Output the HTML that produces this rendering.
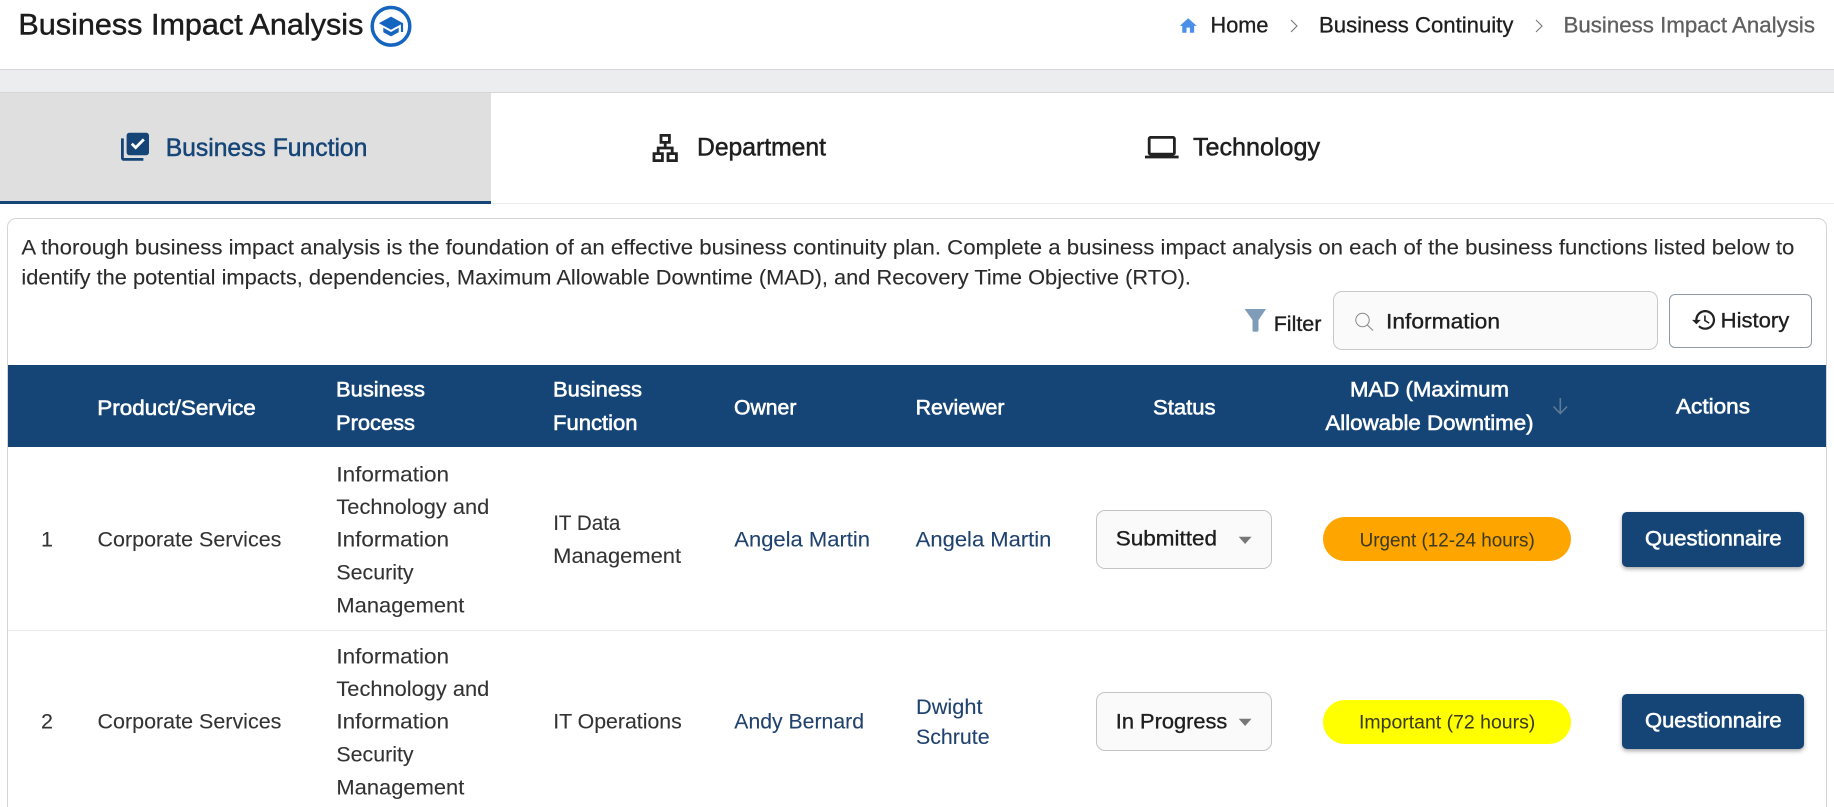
<!DOCTYPE html>
<html lang="en">
<head>
<meta charset="utf-8">
<title>Business Impact Analysis</title>
<style>
html,body{margin:0;padding:0;background:#fff;width:1834px;height:807px;overflow:hidden}
#page{position:relative;width:1834px;height:807px;overflow:hidden;background:#fff}
.box{position:absolute;box-sizing:border-box}
svg{position:absolute;left:0;top:0}
text{font-family:"Liberation Sans",Arial,sans-serif;white-space:pre}
.b{font-size:21.5px;fill:#333;stroke:#333;stroke-width:.1px}
.p{font-size:21.5px;fill:#2b2b2b;stroke:#2b2b2b;stroke-width:.1px}
.l{font-size:21.5px;fill:#20426e;stroke:#20426e;stroke-width:.1px}
.h{font-size:21.5px;fill:#fff;stroke:#fff;stroke-width:.6px}
.m{font-size:21.5px;fill:#1e1e1e;stroke:#1e1e1e;stroke-width:.35px}
.t{font-size:25px;fill:#1e1e1e;stroke:#1e1e1e;stroke-width:.5px}
.c{font-size:22px;fill:#1e1e1e;stroke:#1e1e1e;stroke-width:.3px}
.s{font-size:19px;fill:#3b3b20;stroke:#3b3b20;stroke-width:.05px}
</style>
</head>
<body>
<div id="page">
<div class="box" style="left:0;top:69px;width:1834px;height:24px;background:#ecedef;border-top:1px solid #d6d6d9;border-bottom:1px solid #d6d6d9"></div>
<div class="box" style="left:0;top:93px;width:491px;height:108px;background:#dfdfe0"></div>
<div class="box" style="left:0;top:201px;width:491px;height:3px;background:#154576"></div>
<div class="box" style="left:491px;top:203px;width:1343px;height:1px;background:#ededed"></div>
<div class="box" style="left:7px;top:218px;width:1820px;height:620px;border:1px solid #d2d4d7;border-radius:9px;background:#fff"></div>
<div class="box" style="left:8px;top:365px;width:1818px;height:82px;background:#154576"></div>
<div class="box" style="left:8px;top:630px;width:1818px;height:1px;background:#ececec"></div>
<div class="box" style="left:1333px;top:291px;width:325px;height:59px;background:#fafafa;border:1px solid #c6c8cc;border-radius:9px"></div>
<div class="box" style="left:1669px;top:294px;width:143px;height:54px;background:#fff;border:1px solid #8e9aa8;border-radius:6px"></div>
<div class="box" style="left:1096px;top:510px;width:176px;height:59px;background:#fafafa;border:1px solid #c4c4c4;border-radius:9px"></div>
<div class="box" style="left:1096px;top:692px;width:176px;height:59px;background:#fafafa;border:1px solid #c4c4c4;border-radius:9px"></div>
<div class="box" style="left:1323px;top:517px;width:248px;height:44px;background:#ffa500;border-radius:22px"></div>
<div class="box" style="left:1323px;top:700px;width:248px;height:44px;background:#ffff00;border-radius:22px"></div>
<div class="box" style="left:1622px;top:512px;width:182px;height:55px;background:#154576;border-radius:5px;box-shadow:0 2px 4px rgba(0,0,0,.35)"></div>
<div class="box" style="left:1622px;top:694px;width:182px;height:55px;background:#154576;border-radius:5px;box-shadow:0 2px 4px rgba(0,0,0,.35)"></div>

<svg width="1834" height="807" viewBox="0 0 1834 807" xmlns="http://www.w3.org/2000/svg">
<!-- title -->
<text x="18.4" y="34.3" font-size="29.5" fill="#1c1c1c" stroke="#1c1c1c" stroke-width=".45" textLength="345" lengthAdjust="spacingAndGlyphs">Business Impact Analysis</text>
<circle cx="391" cy="26.3" r="18.8" fill="none" stroke="#1565c0" stroke-width="3.5"/>
<g transform="translate(377.8 13.3) scale(1.1)"><path fill="#1565c0" d="M5 13.18v4L12 21l7-3.82v-4L12 17l-7-3.82zM12 3L1 9l11 6 9-4.91V17h2V9L12 3z"/></g>

<!-- breadcrumb -->
<g transform="translate(1178 15.7) scale(.85)"><path fill="#4a90e8" d="M10 20v-6h4v6h5v-8h3L12 3 2 12h3v8z"/></g>
<text class="c" x="1210.5" y="32.7" textLength="58" lengthAdjust="spacingAndGlyphs">Home</text>
<path d="M1291 20l6 6-6 6" fill="none" stroke="#777" stroke-width="1.1"/>
<text class="c" x="1319" y="32.7" textLength="194.4" lengthAdjust="spacingAndGlyphs">Business Continuity</text>
<path d="M1536 20l6 6-6 6" fill="none" stroke="#777" stroke-width="1.1"/>
<text class="c" x="1563.5" y="32.7" textLength="251.5" lengthAdjust="spacingAndGlyphs" style="fill:#5f5f5f;stroke:#5f5f5f">Business Impact Analysis</text>

<!-- tabs -->
<g transform="translate(118.2 130) scale(1.4)"><rect x="8" y="4" width="12" height="12" fill="#fff"/><path fill="#154576" d="M20 2H8c-1.1 0-2 .9-2 2v12c0 1.1.9 2 2 2h12c1.1 0 2-.9 2-2V4c0-1.1-.9-2-2-2zm-7.53 12L9 10.5l1.4-1.41 2.07 2.08L17.6 6 19 7.41 12.47 14zM4 20h14v2H4c-1.1 0-2-.9-2-2V6h2v14z"/></g>
<text class="t" x="165.7" y="156" textLength="201.7" lengthAdjust="spacingAndGlyphs" style="fill:#164577;stroke:#164577">Business Function</text>
<g transform="translate(648.4 131.2) scale(1.4)"><path fill="#222" d="M13 22h8v-7h-3v-4h-5V9h3V2H8v7h3v2H6v4H3v7h8v-7H8v-2h8v2h-3v7zM10 7V4h4v3h-4zM9 17v3H5v-3h4zm10 0v3h-4v-3h4z"/></g>
<text class="t" x="697" y="155.7" textLength="129" lengthAdjust="spacingAndGlyphs">Department</text>
<g transform="translate(1145 130.4) scale(1.4)"><path fill="#222" d="M20 18c1.1 0 1.99-.9 1.99-2L22 6c0-1.1-.9-2-2-2H4c-1.1 0-2 .9-2 2v10c0 1.1.9 2 2 2H0v2h24v-2h-4zM4 6h16v10H4V6z"/></g>
<text class="t" x="1193" y="155.7" textLength="127" lengthAdjust="spacingAndGlyphs">Technology</text>

<!-- intro -->
<text class="p" x="21.4" y="254.3" textLength="1773" lengthAdjust="spacingAndGlyphs">A thorough business impact analysis is the foundation of an effective business continuity plan. Complete a business impact analysis on each of the business functions listed below to</text>
<text class="p" x="21.4" y="284.3" textLength="1169.6" lengthAdjust="spacingAndGlyphs">identify the potential impacts, dependencies, Maximum Allowable Downtime (MAD), and Recovery Time Objective (RTO).</text>

<!-- filter -->
<path fill="#7f9cb8" d="M1244.6 309H1266L1258.5 320V330.3Q1258.5 331.7 1257 331.7H1254Q1252.5 331.7 1252.5 330.3V320Z"/>
<text class="m" x="1273.7" y="331" textLength="47.7" lengthAdjust="spacingAndGlyphs">Filter</text>
<circle cx="1362.5" cy="320" r="6.7" fill="none" stroke="#8a8a8a" stroke-width="1"/>
<path d="M1367.3 325L1373 330.5" stroke="#8a8a8a" stroke-width="1.1" fill="none"/>
<text class="m" x="1386" y="328.3" textLength="114" lengthAdjust="spacingAndGlyphs">Information</text>
<g transform="translate(1690.9 306.7) scale(1.1)"><path fill="#222" d="M13 3c-4.97 0-9 4.03-9 9H1l3.89 3.89.07.14L9 12H6c0-3.87 3.13-7 7-7s7 3.13 7 7-3.13 7-7 7c-1.93 0-3.68-.79-4.94-2.06l-1.42 1.42C8.27 19.99 10.51 21 13 21c4.97 0 9-4.03 9-9s-4.03-9-9-9zm-1 5v5l4.28 2.54.72-1.21-3.5-2.08V8H12z"/></g>
<text class="m" x="1720.7" y="327.7" textLength="68.6" lengthAdjust="spacingAndGlyphs">History</text>

<!-- table head -->
<text class="h" x="97.3" y="415" textLength="158.5" lengthAdjust="spacingAndGlyphs">Product/Service</text>
<text class="h" x="336" y="396.7" textLength="89" lengthAdjust="spacingAndGlyphs">Business</text>
<text class="h" x="336" y="430" textLength="79" lengthAdjust="spacingAndGlyphs">Process</text>
<text class="h" x="553" y="396.7" textLength="89" lengthAdjust="spacingAndGlyphs">Business</text>
<text class="h" x="553" y="430" textLength="84.5" lengthAdjust="spacingAndGlyphs">Function</text>
<text class="h" x="734" y="414.3" textLength="62.4" lengthAdjust="spacingAndGlyphs">Owner</text>
<text class="h" x="915.6" y="414.3" textLength="88.9" lengthAdjust="spacingAndGlyphs">Reviewer</text>
<text class="h" x="1153" y="414.3" textLength="62.6" lengthAdjust="spacingAndGlyphs">Status</text>
<text class="h" x="1350" y="396.7" textLength="159" lengthAdjust="spacingAndGlyphs">MAD (Maximum</text>
<text class="h" x="1325.4" y="430" textLength="208.2" lengthAdjust="spacingAndGlyphs">Allowable Downtime)</text>
<path d="M1560.3 398V413M1553.5 406.5L1560.3 413.5L1567.1 406.5" fill="none" stroke="#5f7a96" stroke-width="1.6"/>
<text class="h" x="1676" y="413.7" textLength="74" lengthAdjust="spacingAndGlyphs">Actions</text>

<!-- row 1 -->
<text class="b" x="41" y="546.7">1</text>
<text class="b" x="97.5" y="546.7" textLength="183.9" lengthAdjust="spacingAndGlyphs">Corporate Services</text>
<text class="b" x="336.4" y="481.3" textLength="112.6" lengthAdjust="spacingAndGlyphs">Information</text>
<text class="b" x="336.4" y="514" textLength="152.9" lengthAdjust="spacingAndGlyphs">Technology and</text>
<text class="b" x="336.4" y="546.7" textLength="112.6" lengthAdjust="spacingAndGlyphs">Information</text>
<text class="b" x="336.4" y="579.3" textLength="77.2" lengthAdjust="spacingAndGlyphs">Security</text>
<text class="b" x="336.4" y="612.7" textLength="127.9" lengthAdjust="spacingAndGlyphs">Management</text>
<text class="b" x="553.2" y="530" textLength="67.2" lengthAdjust="spacingAndGlyphs">IT Data</text>
<text class="b" x="553.2" y="563" textLength="127.9" lengthAdjust="spacingAndGlyphs">Management</text>
<text class="l" x="734.3" y="546.7" textLength="135.7" lengthAdjust="spacingAndGlyphs">Angela Martin</text>
<text class="l" x="915.7" y="546.7" textLength="135.7" lengthAdjust="spacingAndGlyphs">Angela Martin</text>
<text class="m" x="1115.8" y="545.7" textLength="101.2" lengthAdjust="spacingAndGlyphs">Submitted</text>
<path fill="#777" d="M1238.7 536.7H1251.5L1245.1 544Z"/>
<text class="s" x="1359.6" y="546.7" textLength="175.2" lengthAdjust="spacingAndGlyphs">Urgent (12-24 hours)</text>
<text class="h" x="1645" y="545.7" textLength="136.6" lengthAdjust="spacingAndGlyphs">Questionnaire</text>

<!-- row 2 -->
<text class="b" x="41" y="728.7">2</text>
<text class="b" x="97.5" y="728.7" textLength="183.9" lengthAdjust="spacingAndGlyphs">Corporate Services</text>
<text class="b" x="336.4" y="663.3" textLength="112.6" lengthAdjust="spacingAndGlyphs">Information</text>
<text class="b" x="336.4" y="696" textLength="152.9" lengthAdjust="spacingAndGlyphs">Technology and</text>
<text class="b" x="336.4" y="728.7" textLength="112.6" lengthAdjust="spacingAndGlyphs">Information</text>
<text class="b" x="336.4" y="761.3" textLength="77.2" lengthAdjust="spacingAndGlyphs">Security</text>
<text class="b" x="336.4" y="794.7" textLength="127.9" lengthAdjust="spacingAndGlyphs">Management</text>
<text class="b" x="553.2" y="728.7" textLength="128.6" lengthAdjust="spacingAndGlyphs">IT Operations</text>
<text class="l" x="734.3" y="728.7" textLength="129.7" lengthAdjust="spacingAndGlyphs">Andy Bernard</text>
<text class="l" x="916" y="714" textLength="66.5" lengthAdjust="spacingAndGlyphs">Dwight</text>
<text class="l" x="916" y="744" textLength="73.6" lengthAdjust="spacingAndGlyphs">Schrute</text>
<text class="m" x="1115.8" y="728.3" textLength="111.5" lengthAdjust="spacingAndGlyphs">In Progress</text>
<path fill="#777" d="M1238.7 718.7H1251.5L1245.1 726Z"/>
<text class="s" x="1359" y="728.7" textLength="176.3" lengthAdjust="spacingAndGlyphs">Important (72 hours)</text>
<text class="h" x="1645" y="727.7" textLength="136.6" lengthAdjust="spacingAndGlyphs">Questionnaire</text>
</svg>
</div>
</body>
</html>
